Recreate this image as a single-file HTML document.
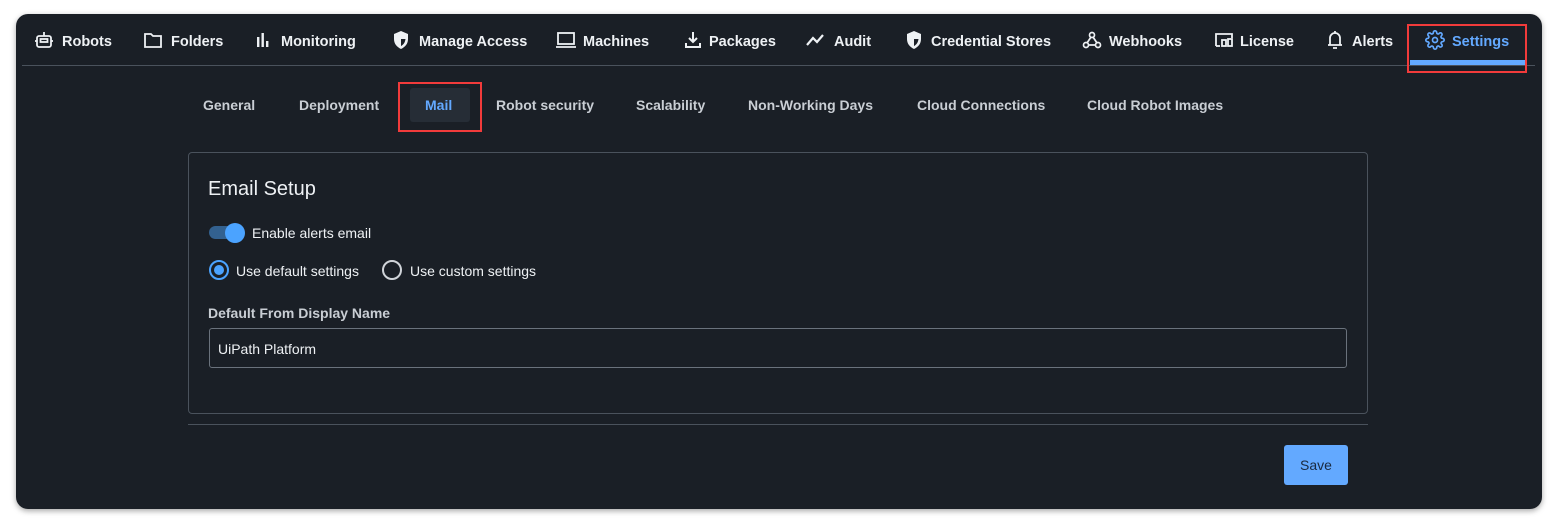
<!DOCTYPE html>
<html><head><meta charset="utf-8"><style>
body{margin:0;width:1557px;height:523px;background:#fff;font-family:"Liberation Sans",sans-serif;position:relative;overflow:hidden}
.win{position:absolute;left:16px;top:14px;width:1526px;height:495px;background:#1a1f26;border-radius:12px;box-shadow:0 2px 6px rgba(0,0,0,.35)}
.a{position:absolute;white-space:nowrap}
.nav{top:34px;font-size:14.5px;font-weight:bold;color:#eef1f4}
.ic{position:absolute;top:30px}
.sub{top:97px;font-size:14px;font-weight:bold;color:#c9ced4}
</style></head><body>
<div class="win"></div>
<svg class="ic" style="left:34px" width="20" height="20" viewBox="0 0 20 20" fill="none" stroke="#eef1f4" stroke-width="1.8"><rect x="3" y="6" width="14" height="11" rx="2"/><line x1="10" y1="2" x2="10" y2="6"/><rect x="6.5" y="9" width="7" height="3"/><line x1="1" y1="11" x2="3" y2="11"/><line x1="17" y1="11" x2="19" y2="11"/></svg>
<div class="a nav" style="left:62px">Robots</div>
<svg class="ic" style="left:143px" width="20" height="20" viewBox="0 0 20 20" fill="none" stroke="#eef1f4" stroke-width="1.8"><path d="M2 4h6l2 2h8v11H2z"/></svg>
<div class="a nav" style="left:171px">Folders</div>
<svg class="ic" style="left:255px" width="18" height="20" viewBox="0 0 18 20" fill="#eef1f4"><rect x="2" y="7" width="2.4" height="10"/><rect x="6.5" y="3" width="2.4" height="14"/><rect x="11" y="11" width="2.4" height="6"/></svg>
<div class="a nav" style="left:281px">Monitoring</div>
<svg class="ic" style="left:391px" width="20" height="20" viewBox="0 0 20 20"><path d="M10 1l7 3v5c0 5-3 8-7 10C6 17 3 14 3 9V4z" fill="#eef1f4"/><path d="M10 4v12c2-1 4-3 4.5-7H10z" fill="#1a1f26"/></svg>
<div class="a nav" style="left:419px">Manage Access</div>
<svg class="ic" style="left:555px" width="22" height="20" viewBox="0 0 22 20" fill="none" stroke="#eef1f4" stroke-width="1.8"><rect x="3" y="3" width="16" height="11"/><line x1="1" y1="17" x2="21" y2="17"/></svg>
<div class="a nav" style="left:583px">Machines</div>
<svg class="ic" style="left:683px" width="20" height="20" viewBox="0 0 20 20" fill="none" stroke="#eef1f4" stroke-width="2"><path d="M10 2v10M6 8l4 4 4-4M3 13v4h14v-4"/></svg>
<div class="a nav" style="left:709px">Packages</div>
<svg class="ic" style="left:805px" width="22" height="20" viewBox="0 0 22 20" fill="none" stroke="#eef1f4" stroke-width="2.2"><path d="M2 15l6-7 4 4 6-7"/></svg>
<div class="a nav" style="left:834px">Audit</div>
<svg class="ic" style="left:904px" width="20" height="20" viewBox="0 0 20 20"><path d="M10 1l7 3v5c0 5-3 8-7 10C6 17 3 14 3 9V4z" fill="#eef1f4"/><path d="M10 4v12c2-1 4-3 4.5-7H10z" fill="#1a1f26"/></svg>
<div class="a nav" style="left:931px">Credential Stores</div>
<svg class="ic" style="left:1082px" width="20" height="20" viewBox="0 0 20 20" fill="none" stroke="#eef1f4" stroke-width="1.7"><circle cx="10" cy="5" r="2.5"/><circle cx="4" cy="15" r="2.5"/><circle cx="16" cy="15" r="2.5"/><path d="M9 7l-4 6M11 7l4 6M6.5 15h7"/></svg>
<div class="a nav" style="left:1109px">Webhooks</div>
<svg class="ic" style="left:1213px" width="22" height="20" viewBox="0 0 22 20" fill="none" stroke="#eef1f4" stroke-width="1.8"><path d="M3 16V4h16v4"/><rect x="9" y="10" width="4" height="6"/><rect x="15" y="9" width="4" height="7"/><line x1="3" y1="16" x2="7" y2="16"/></svg>
<div class="a nav" style="left:1240px">License</div>
<svg class="ic" style="left:1325px" width="20" height="20" viewBox="0 0 20 20" fill="none" stroke="#eef1f4" stroke-width="1.8"><path d="M5 15V8a5 5 0 0 1 10 0v7zM3 15h14M8 18h4M10 1v2"/></svg>
<div class="a nav" style="left:1352px">Alerts</div>
<svg class="ic" style="left:1425px" width="20" height="20" viewBox="0 0 24 24" fill="none" stroke="#63a9ff" stroke-width="2"><circle cx="12" cy="12" r="3"/><path d="M19.4 15a1.7 1.7 0 0 0 .3 1.8l.1.1a2 2 0 1 1-2.8 2.8l-.1-.1a1.7 1.7 0 0 0-1.8-.3 1.7 1.7 0 0 0-1 1.5V21a2 2 0 1 1-4 0v-.1a1.7 1.7 0 0 0-1.1-1.5 1.7 1.7 0 0 0-1.8.3l-.1.1a2 2 0 1 1-2.8-2.8l.1-.1a1.7 1.7 0 0 0 .3-1.8 1.7 1.7 0 0 0-1.5-1H3a2 2 0 1 1 0-4h.1a1.7 1.7 0 0 0 1.500-1.1 1.7 1.7 0 0 0-.3-1.8l-.1-.1a2 2 0 1 1 2.8-2.8l.1.1a1.7 1.7 0 0 0 1.8.3H9a1.7 1.7 0 0 0 1-1.5V3a2 2 0 1 1 4 0v.1a1.7 1.7 0 0 0 1 1.5 1.7 1.7 0 0 0 1.8-.3l.1-.1a2 2 0 1 1 2.8 2.8l-.1.1a1.7 1.7 0 0 0-.3 1.8V9a1.7 1.7 0 0 0 1.5 1H21a2 2 0 1 1 0 4h-.1a1.7 1.7 0 0 0-1.5 1z"/></svg>
<div class="a nav" style="left:1452px;color:#63a9ff">Settings</div>
<div class="a" style="left:22px;top:65px;width:1513px;height:1px;background:#4a525c"></div>
<div class="a" style="left:1410px;top:60px;width:115px;height:5px;background:#63a9ff"></div>
<div class="a" style="left:1407px;top:24px;width:116px;height:45px;border:2px solid #f23b3b"></div>
<div class="a" style="left:410px;top:88px;width:60px;height:34px;background:#262d36;border-radius:3px"></div>
<div class="a sub" style="left:203px">General</div>
<div class="a sub" style="left:299px">Deployment</div>
<div class="a sub" style="left:425px;color:#63a9ff">Mail</div>
<div class="a sub" style="left:496px">Robot security</div>
<div class="a sub" style="left:636px">Scalability</div>
<div class="a sub" style="left:748px">Non-Working Days</div>
<div class="a sub" style="left:917px">Cloud Connections</div>
<div class="a sub" style="left:1087px">Cloud Robot Images</div>
<div class="a" style="left:398px;top:82px;width:80px;height:46px;border:2px solid #f23b3b"></div>
<div class="a" style="left:188px;top:152px;width:1178px;height:260px;border:1px solid #4a525c;border-radius:4px"></div>
<div class="a" style="left:208px;top:178px;font-size:20px;color:#eef1f4">Email Setup</div>
<div class="a" style="left:209px;top:226px;width:34px;height:13px;border-radius:7px;background:#33618f"></div>
<div class="a" style="left:225px;top:223px;width:20px;height:20px;border-radius:50%;background:#4ba3ff"></div>
<div class="a" style="left:252px;top:225px;font-size:14px;color:#eef1f4">Enable alerts email</div>
<div class="a" style="left:209px;top:260px;width:16px;height:16px;border-radius:50%;border:2px solid #4ba3ff"></div>
<div class="a" style="left:214px;top:265px;width:10px;height:10px;border-radius:50%;background:#4ba3ff"></div>
<div class="a" style="left:236px;top:263px;font-size:14px;color:#eef1f4">Use default settings</div>
<div class="a" style="left:382px;top:260px;width:16px;height:16px;border-radius:50%;border:2px solid #d0d4d9"></div>
<div class="a" style="left:410px;top:263px;font-size:14px;color:#eef1f4">Use custom settings</div>
<div class="a" style="left:208px;top:305px;font-size:14px;font-weight:bold;color:#c9ced4">Default From Display Name</div>
<div class="a" style="left:209px;top:328px;width:1136px;height:38px;border:1px solid #6a727c;border-radius:3px"></div>
<div class="a" style="left:218px;top:341px;font-size:14px;color:#eef1f4">UiPath Platform</div>
<div class="a" style="left:188px;top:424px;width:1180px;height:1px;background:#4a525c"></div>
<div class="a" style="left:1284px;top:445px;width:64px;height:40px;background:#63a9ff;border-radius:3px;color:#1a2a40;font-size:14px;line-height:40px;text-align:center">Save</div>
</body></html>
